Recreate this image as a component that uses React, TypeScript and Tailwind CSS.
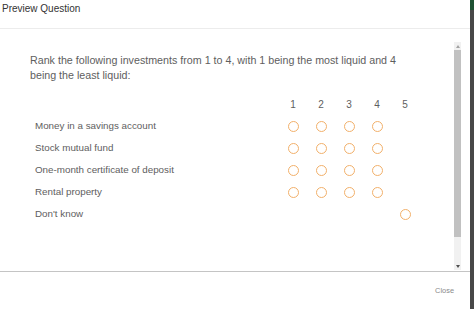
import React from "react"

const rows = [
  { label: "Money in a savings account", cols: [1, 2, 3, 4] },
  { label: "Stock mutual fund", cols: [1, 2, 3, 4] },
  { label: "One-month certificate of deposit", cols: [1, 2, 3, 4] },
  { label: "Rental property", cols: [1, 2, 3, 4] },
  { label: "Don't know", cols: [5] },
]

function Radio() {
  return <span className="block h-[11px] w-[11px] rounded-full border border-[#f2b06a] bg-white" />
}

function Scrollbar() {
  return (
    <div className="mt-[13px] mr-[9px] flex h-[228px] w-[7px] flex-col bg-[#f1f1f1]">
      <div className="flex h-[8px] items-center justify-center">
        <span className="h-0 w-0 border-x-[2px] border-b-[3px] border-x-transparent border-b-[#a3a3a3]" />
      </div>
      <div className="h-[187px] bg-[#c1c1c1]" />
      <div className="flex-1" />
      <div className="flex h-[8px] items-center justify-center">
        <span className="h-0 w-0 border-x-[2px] border-t-[3px] border-x-transparent border-t-[#505050]" />
      </div>
    </div>
  )
}

export default function App() {
  return (
    <div className="flex h-[309px] w-[474px] overflow-hidden bg-white font-['Liberation_Sans',Arial,sans-serif]">
      <div className="flex flex-1 flex-col bg-white">
        <header className="flex h-[29px] shrink-0 items-start border-b border-[#ececec] px-[2px] pt-[3px]">
          <h1 className="text-[10px] leading-[12px] text-[#333]">Preview Question</h1>
        </header>

        <div className="flex flex-1">
          <div className="flex-1 pl-[30px] pt-[24px]">
            <p className="w-[380px] text-[10.7px] leading-[15px] text-[#5e5e5e]">
              Rank the following investments from 1 to 4, with 1 being the most liquid and 4 being the least liquid:
            </p>

            <div className="mt-[10px] ml-[5px] grid grid-cols-[244px_repeat(5,28px)] text-[9.8px] text-[#5e5e5e]">
              <div className="h-[22px]" />
              {[1, 2, 3, 4, 5].map((n) => (
                <div key={n} className="flex h-[22px] items-center justify-center text-[10px]">{n}</div>
              ))}
              {rows.map((row) => (
                <React.Fragment key={row.label}>
                  <div className="flex h-[22px] items-center">{row.label}</div>
                  {[1, 2, 3, 4, 5].map((n) => (
                    <div key={n} className="flex h-[22px] items-center justify-center">
                      {row.cols.includes(n) && <Radio />}
                    </div>
                  ))}
                </React.Fragment>
              ))}
            </div>
          </div>
          <Scrollbar />
        </div>

        <footer className="flex h-[38px] shrink-0 items-center justify-end border-t border-[#c4c4c4] pr-[16px]">
          <button className="text-[7.4px] text-[#8a8a8a]">Close</button>
        </footer>
      </div>
      <div className="flex w-[4px] flex-col bg-[#484848]">
        <div className="h-[10px] bg-[#1d5233]" />
      </div>
    </div>
  )
}
